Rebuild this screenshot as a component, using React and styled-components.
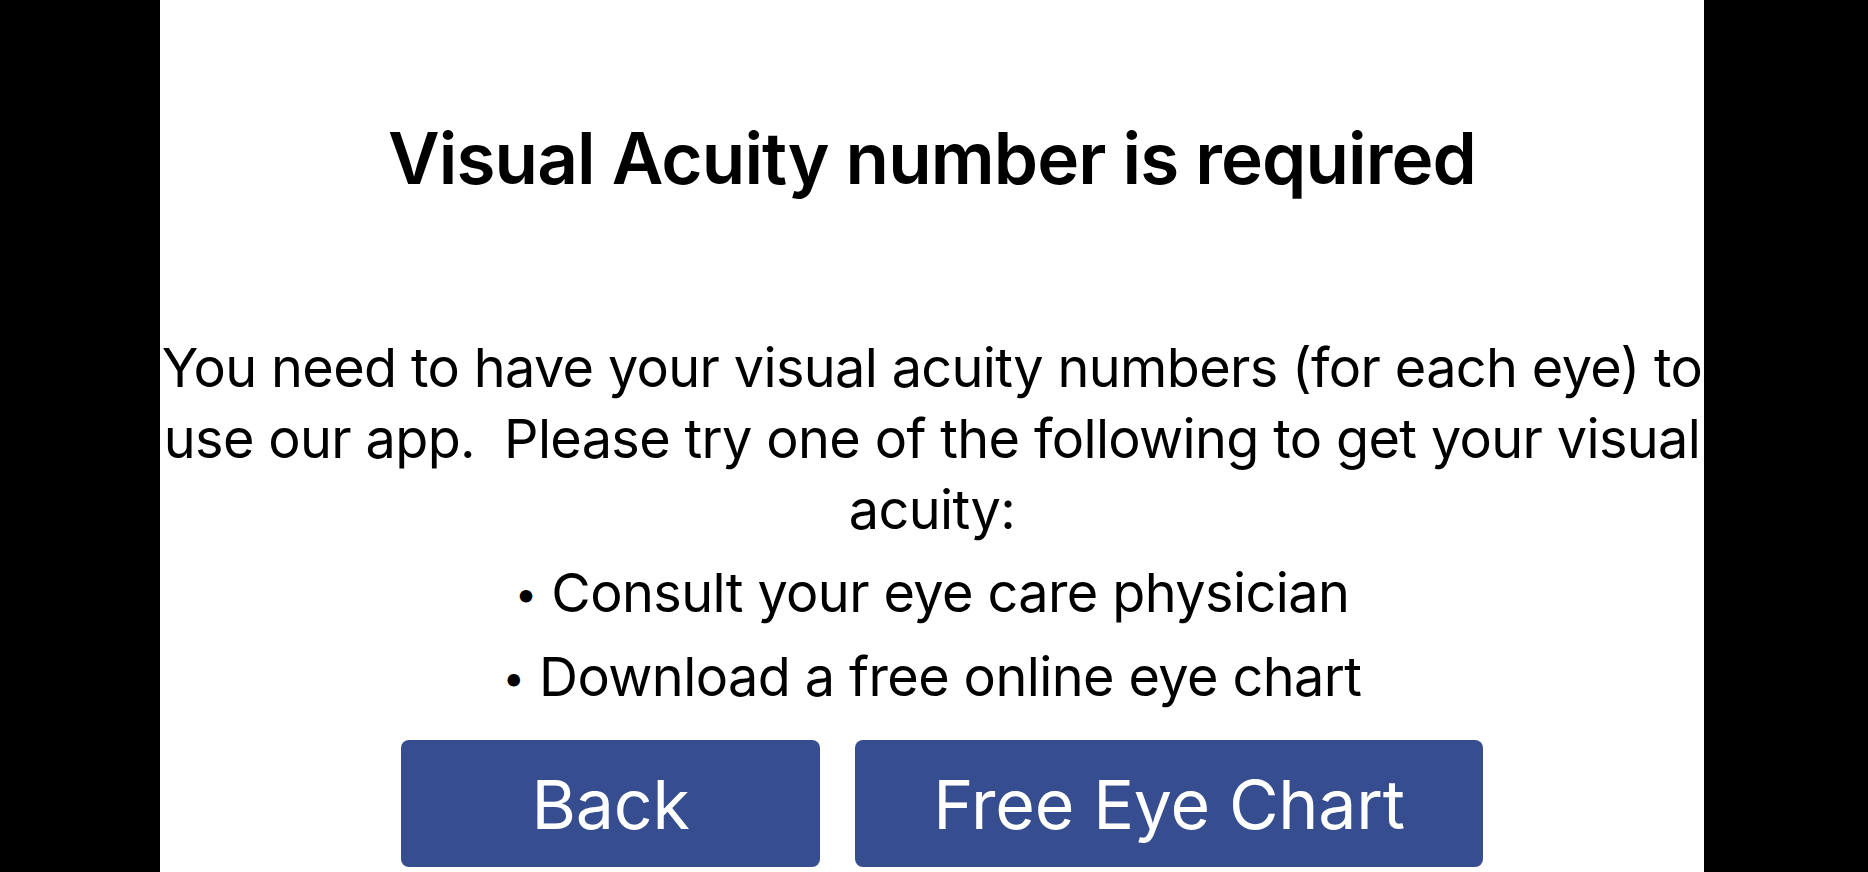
import React from 'react';
import styled, { createGlobalStyle } from 'styled-components';

const GlobalStyle = createGlobalStyle`
	html, body {
		margin: 0;
		padding: 0;
		background: #000;
		height: 100%;
		overflow: hidden;
	}
	#root {
		height: 100%;
	}
`;

const Screen = styled.div`
	height: 872px;
	display: flex;
	justify-content: center;
	background: #000;
`;

const Panel = styled.main`
	width: 1544px;
	margin-left: -4px;
	background: #fff;
	display: flex;
	flex-direction: column;
	align-items: center;
	padding-top: 115px;
	box-sizing: border-box;
	font-family: Inter, 'Noto Sans', sans-serif;
	color: #000;
	text-align: center;
`;

const Title = styled.h1`
	margin: 0;
	font-size: 71px;
	line-height: 87px;
	font-weight: 600;
	letter-spacing: -0.9px;
`;

const Message = styled.p`
	margin: 130px 0 0;
	font-size: 54px;
	line-height: 71px;
	font-weight: 400;
	letter-spacing: -0.65px;
	white-space: pre;
`;

const Tip = styled.div`
	margin-top: 12px;
	font-size: 54px;
	line-height: 71px;
	letter-spacing: -0.6px;
	white-space: pre;
`;

const Dot = styled.span`
	font-size: 40px;
	vertical-align: 4px;
`;

const ButtonRow = styled.div`
	display: flex;
	gap: 35px;
	margin-top: 27px;
	padding-left: 20px;
`;

const Button = styled.button`
	width: ${(p) => p.w}px;
	height: 127px;
	border: none;
	border-radius: 8px;
	background: #364e8f;
	color: #fff;
	font-family: Inter, 'Noto Sans', sans-serif;
	font-size: 68px;
	font-weight: 400;
	letter-spacing: -0.2px;
	padding: 0;
	cursor: pointer;
`;

const tips = ['Consult your eye care physician', 'Download a free online eye chart'];

const App = () => (
	<>
		<GlobalStyle />
		<Screen>
			<Panel>
				<Title>Visual Acuity number is required</Title>
				<Message>
					{'You need to have your visual acuity numbers (for each eye) to\nuse our app.  Please try one of the following to get your visual\nacuity:'}
				</Message>
				{tips.map((t) => (
					<Tip key={t}>
						<Dot>•</Dot> {t}
					</Tip>
				))}
				<ButtonRow>
					<Button w={419}>Back</Button>
					<Button w={628}>Free Eye Chart</Button>
				</ButtonRow>
			</Panel>
		</Screen>
	</>
);

export default App;
